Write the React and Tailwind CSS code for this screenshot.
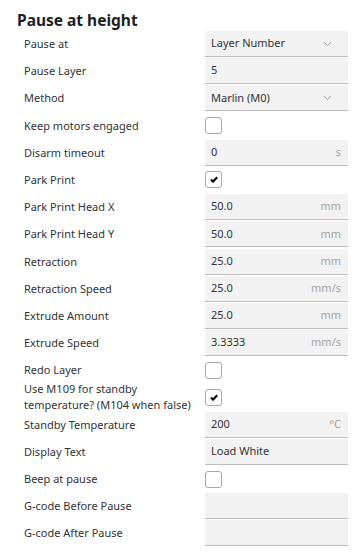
import React from 'react';

const rows = [
  { label: 'Pause at', type: 'select', value: 'Layer Number' },
  { label: 'Pause Layer', type: 'text', value: '5' },
  { label: 'Method', type: 'select', value: 'Marlin (M0)' },
  { label: 'Keep motors engaged', type: 'check', value: false },
  { label: 'Disarm timeout', type: 'text', value: '0', unit: 's' },
  { label: 'Park Print', type: 'check', value: true },
  { label: 'Park Print Head X', type: 'text', value: '50.0', unit: 'mm' },
  { label: 'Park Print Head Y', type: 'text', value: '50.0', unit: 'mm' },
  { label: 'Retraction', type: 'text', value: '25.0', unit: 'mm' },
  { label: 'Retraction Speed', type: 'text', value: '25.0', unit: 'mm/s' },
  { label: 'Extrude Amount', type: 'text', value: '25.0', unit: 'mm' },
  { label: 'Extrude Speed', type: 'text', value: '3.3333', unit: 'mm/s' },
  { label: 'Redo Layer', type: 'check', value: false },
  { label: 'Use M109 for standby temperature? (M104 when false)', type: 'check', value: true },
  { label: 'Standby Temperature', type: 'text', value: '200', unit: '°C' },
  { label: 'Display Text', type: 'text', value: 'Load White' },
  { label: 'Beep at pause', type: 'check', value: false },
  { label: 'G-code Before Pause', type: 'text', value: '' },
  { label: 'G-code After Pause', type: 'text', value: '' },
];

const Chevron = () => (
  <svg width="9" height="6" viewBox="0 0 9 6" fill="none">
    <path d="M0.8 1 L4.5 4.6 L8.2 1" stroke="#9a9a9a" strokeWidth="1" />
  </svg>
);

const CheckBox = ({ checked }) => (
  <div className="w-[17px] h-[17px] rounded-[3px] border border-[#a8a8a8] bg-white flex items-center justify-center">
    {checked && (
      <svg width="8" height="7" viewBox="0 0 8 7">
        <path d="M1 3.6 L3.1 5.6 L7.2 1.2" stroke="#111" strokeWidth="2.2" fill="none" />
      </svg>
    )}
  </div>
);

const Field = ({ row }) => {
  if (row.type === 'check') {
    return (
      <div className="h-[26px] flex items-center">
        <CheckBox checked={row.value} />
      </div>
    );
  }
  return (
    <div className="h-[26px] w-[143px] bg-[#f2f2f2] border-b border-[#bdbdbd] flex items-center pl-[6px] pr-[7px]">
      <span className="flex-1 text-[11px] text-[#333]">{row.value}</span>
      {row.type === 'select' && (
        <span className="mr-[9px] flex items-center">
          <Chevron />
        </span>
      )}
      {row.unit && <span className="text-[11px] text-[#a3a3a3]">{row.unit}</span>}
    </div>
  );
};

export default function App() {
  return (
    <div className="w-[355px] h-[558px] bg-white overflow-hidden" style={{ fontFamily: '"Noto Sans", "Open Sans", sans-serif' }}>
      <h1 className="pl-[17px] pt-[10px] h-[31px] text-[15.5px] leading-[21px] font-bold text-[#1e1e1e]">Pause at height</h1>
      <div className="flex flex-col">
        {rows.map((row) => (
          <div key={row.label} className="h-[27.2px] flex items-start">
            <div className="w-[205px] pl-[24px] pr-[8px] h-[26px] flex items-center text-[11px] leading-[16px] text-[#333]">
              {row.label}
            </div>
            <Field row={row} />
          </div>
        ))}
      </div>
    </div>
  );
}
